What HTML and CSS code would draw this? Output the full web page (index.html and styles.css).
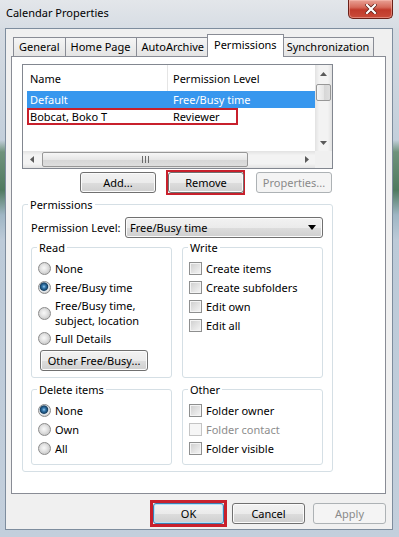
FILE: index.html
```html
<!DOCTYPE html>
<html lang="en">
<head>
    <meta charset="UTF-8">
    <title>Calendar Properties</title>
    <link rel="stylesheet" href="styles.css">
</head>
<body>
    <div class="window">
        <div class="titlebar">
            <span class="title">Calendar Properties</span>
            <span class="close-btn">
                <svg width="12" height="10" viewBox="0 0 12 10">
                    <path d="M2 1 L10 9 M10 1 L2 9" stroke="#5a1a14" stroke-width="3.6" stroke-linecap="square"/>
                    <path d="M2 1 L10 9 M10 1 L2 9" stroke="#fff" stroke-width="2.2" stroke-linecap="square"/>
                </svg>
            </span>
        </div>

        <div class="client">
            <div class="tabs">
                <span class="tab">General</span>
                <span class="tab">Home Page</span>
                <span class="tab">AutoArchive</span>
                <span class="tab active">Permissions</span>
                <span class="tab">Synchronization</span>
            </div>

            <div class="panel">
                <div class="listbox">
                    <div class="list-view">
                        <div class="list-header">
                            <span class="hd-name">Name</span>
                            <span class="hd-level">Permission Level</span>
                        </div>
                        <div class="list-row selected">
                            <span class="c1">Default</span>
                            <span class="c2">Free/Busy time</span>
                        </div>
                        <div class="list-row flagged">
                            <span class="c1">Bobcat, Boko T</span>
                            <span class="c2">Reviewer</span>
                        </div>
                    </div>
                    <div class="vscroll">
                        <span class="sb-arrow">
                            <svg width="7" height="4" viewBox="0 0 7 4"><polygon points="0,4 3.5,0 7,4" fill="#5a5a5a"/></svg>
                        </span>
                        <span class="sb-thumb v"></span>
                        <span class="sb-arrow end">
                            <svg width="7" height="4" viewBox="0 0 7 4"><polygon points="0,0 7,0 3.5,4" fill="#5a5a5a"/></svg>
                        </span>
                    </div>
                    <div class="hscroll">
                        <span class="sb-arrow">
                            <svg width="4" height="7" viewBox="0 0 4 7"><polygon points="4,0 4,7 0,3.5" fill="#5a5a5a"/></svg>
                        </span>
                        <span class="sb-thumb h">
                            <svg width="7" height="7" viewBox="0 0 7 7">
                                <path d="M0.5 0V7M3.5 0V7M6.5 0V7" stroke="#6b6b6b" stroke-width="1"/>
                            </svg>
                        </span>
                        <span class="sb-arrow end">
                            <svg width="4" height="7" viewBox="0 0 4 7"><polygon points="0,0 4,3.5 0,7" fill="#5a5a5a"/></svg>
                        </span>
                    </div>
                    <div class="sb-corner"></div>
                </div>

                <div class="list-buttons">
                    <button class="btn">Add...</button>
                    <span class="flag"><button class="btn">Remove</button></span>
                    <button class="btn wide" disabled>Properties...</button>
                </div>

                <fieldset class="group perms">
                    <legend>Permissions</legend>
                    <div class="level-row">
                        <span>Permission Level:</span>
                        <div class="select">
                            <span>Free/Busy time</span>
                            <svg width="8" height="5" viewBox="0 0 8 5"><polygon points="0,0 8,0 4,5" fill="#000"/></svg>
                        </div>
                    </div>

                    <div class="group-grid">
                        <fieldset class="group sub">
                            <legend>Read</legend>
                            <div class="option"><span class="radio"></span><span>None</span></div>
                            <div class="option"><span class="radio on"></span><span>Free/Busy time</span></div>
                            <div class="option two"><span class="radio"></span><span>Free/Busy time,<br>subject, location</span></div>
                            <div class="option"><span class="radio"></span><span>Full Details</span></div>
                            <button class="btn other">Other Free/Busy...</button>
                        </fieldset>

                        <fieldset class="group sub">
                            <legend>Write</legend>
                            <div class="option"><span class="check"></span><span>Create items</span></div>
                            <div class="option"><span class="check"></span><span>Create subfolders</span></div>
                            <div class="option"><span class="check"></span><span>Edit own</span></div>
                            <div class="option"><span class="check"></span><span>Edit all</span></div>
                        </fieldset>

                        <fieldset class="group sub">
                            <legend>Delete items</legend>
                            <div class="option"><span class="radio on"></span><span>None</span></div>
                            <div class="option"><span class="radio"></span><span>Own</span></div>
                            <div class="option"><span class="radio"></span><span>All</span></div>
                        </fieldset>

                        <fieldset class="group sub">
                            <legend>Other</legend>
                            <div class="option"><span class="check"></span><span>Folder owner</span></div>
                            <div class="option disabled"><span class="check"></span><span>Folder contact</span></div>
                            <div class="option"><span class="check"></span><span>Folder visible</span></div>
                        </fieldset>
                    </div>
                </fieldset>
            </div>

            <div class="dialog-buttons">
                <span class="flag ok"><button class="btn default">OK</button></span>
                <button class="btn">Cancel</button>
                <button class="btn" disabled>Apply</button>
            </div>
        </div>
    </div>
</body>
</html>
```

FILE: styles.css
```css
* {
    box-sizing: border-box;
}

body {
    margin: 0;
    font-family: "Noto Sans", "Open Sans", sans-serif;
    font-size: 11px;
    color: #000;
}

/* Window frame (Aero glass) */
.window {
    width: 399px;
    height: 537px;
    display: flex;
    flex-direction: column;
    overflow: hidden;
    background: linear-gradient(180deg, #e2e5e9 0, #d5dbe2 30px, #c3cfdb 140px, #6f937c 152px, #4f7a5f 190px, #9fb6c4 215px, #bccad8 240px, #c3cfdc 100%);
}

.titlebar {
    height: 28px;
    flex: none;
    display: flex;
    align-items: flex-start;
    padding-left: 6px;
    background: linear-gradient(180deg, #e3e6ea, #d7dde4);
}

.title {
    margin-top: 5px;
    line-height: 16px;
}

.close-btn {
    margin-left: auto;
    margin-right: 6px;
    width: 45px;
    height: 19px;
    display: flex;
    align-items: center;
    justify-content: center;
    border: 1px solid #6a2018;
    border-top: none;
    border-radius: 0 0 5px 5px;
    background: linear-gradient(180deg, #e9a195 0, #d66a5b 40%, #c0392a 55%, #c94c3a 100%);
    box-shadow: inset 0 0 0 1px rgba(255, 200, 190, 0.45);
}

.client {
    flex: 1;
    margin: 0 6px 7px 5px;
    padding: 5px 6px 2px 5px;
    display: flex;
    flex-direction: column;
    background: #f0f0f0;
    border: 1px solid #7e8d9e;
}

/* Tabs */
.tabs {
    height: 22px;
    flex: none;
    display: flex;
    align-items: flex-end;
    margin-left: 2px;
}

.tab {
    height: 19px;
    padding: 0 5px;
    margin-left: -1px;
    line-height: 18px;
    border: 1px solid #898c95;
    border-bottom: none;
    background: linear-gradient(180deg, #f5f5f5, #e4e4e4);
}

.tab:first-child {
    margin-left: 0;
}

.tab.active {
    position: relative;
    z-index: 1;
    height: 23px;
    margin: 0 -2px -1px -3px;
    padding: 0 6px;
    line-height: 19px;
    background: #fff;
}

.tab.active + .tab {
    margin-left: 0;
    padding: 0 4px;
}

.panel {
    height: 438px;
    flex: none;
    padding: 7px 10px 0;
    background: #fff;
    border: 1px solid #898c95;
}

/* List view */
.listbox {
    width: 311px;
    height: 105px;
    display: grid;
    grid-template-columns: 1fr 17px;
    grid-template-rows: 1fr 17px;
    border: 1px solid #828790;
}

.list-view {
    overflow: hidden;
}

.list-header {
    height: 26px;
    display: flex;
}

.hd-name {
    width: 145px;
    padding-left: 7px;
    line-height: 27px;
    border-right: 1px solid #e5e5e5;
}

.hd-level {
    padding-left: 5px;
    line-height: 27px;
}

.list-row {
    height: 17px;
    margin-left: 4px;
    display: flex;
    line-height: 17px;
}

.list-row .c1 {
    width: 143px;
    padding-left: 3px;
}

.list-row .c2 {
    padding-left: 3px;
}

.list-row.selected {
    background: #3797ee;
    color: #fff;
}

.list-row.flagged {
    width: 211px;
    outline: 2px solid #c8202c;
    outline-offset: -2px;
}

.vscroll,
.hscroll {
    display: flex;
}

.vscroll {
    flex-direction: column;
    background: linear-gradient(90deg, #e2e2e2, #f3f3f3 25%, #f3f3f3 75%, #e2e2e2);
}

.hscroll {
    background: linear-gradient(180deg, #e2e2e2, #f3f3f3 25%, #f3f3f3 75%, #e2e2e2);
}

.sb-arrow {
    width: 17px;
    height: 17px;
    flex: none;
    display: flex;
    align-items: center;
    justify-content: center;
}

.sb-arrow.end {
    margin-top: auto;
}

.hscroll .sb-arrow.end {
    margin-top: 0;
    margin-left: auto;
}

.sb-thumb {
    flex: none;
    display: flex;
    align-items: center;
    justify-content: center;
    border: 1px solid #979797;
    border-radius: 2px;
}

.sb-thumb.v {
    height: 17px;
    margin: 2px 1px 0;
    background: linear-gradient(90deg, #f6f6f6, #e6e6e6 50%, #d6d6d6 51%, #dedede);
}

.sb-thumb.h {
    width: 206px;
    margin: 1px 2px;
    background: linear-gradient(180deg, #f6f6f6, #e6e6e6 50%, #d6d6d6 51%, #dedede);
}

.sb-corner {
    background: #f0f0f0;
}

/* Buttons */
.btn {
    width: 75px;
    height: 21px;
    padding: 0;
    font: inherit;
    color: #000;
    border: 1px solid #707070;
    border-radius: 3px;
    background: linear-gradient(180deg, #f2f2f2 0, #ebebeb 50%, #dddddd 51%, #cfcfcf 100%);
    box-shadow: inset 0 0 0 1px #fbfbfb;
}

.btn:disabled {
    color: #8a8a8a;
    border-color: #adb2b5;
    background: #f4f4f4;
    box-shadow: none;
}

.btn.wide {
    width: 76px;
}

.btn.default {
    width: 71px;
    border-color: #3c7fb1;
    box-shadow: inset 0 0 0 1px #b4e2f8;
}

.flag {
    display: inline-flex;
    border: 2px solid #c8202c;
}

.flag.ok {
    border-width: 3px;
    margin-right: -3px;
}

.list-buttons {
    width: 311px;
    height: 25px;
    margin-top: 1px;
    padding-right: 1px;
    display: flex;
    justify-content: flex-end;
    align-items: center;
    gap: 11px;
}

.list-buttons .btn:first-child {
    width: 76px;
    margin-right: -1px;
}

/* Group boxes */
.group {
    margin: 0;
    min-width: 0;
    border: 1px solid #d5dfe5;
    border-radius: 3px;
}

.group legend {
    padding: 0 2px;
    line-height: 15px;
}

.perms {
    width: 311px;
    margin-top: 2px;
    padding: 5px 9px 6px 8px;
}

.perms > legend {
    margin-left: -3px;
}

.level-row {
    height: 21px;
    display: flex;
    align-items: center;
}

.select {
    width: 198px;
    height: 21px;
    margin-left: auto;
    padding: 0 6px 0 4px;
    display: flex;
    align-items: center;
    justify-content: space-between;
    border: 1px solid #707070;
    border-radius: 3px;
    background: linear-gradient(180deg, #f2f2f2 0, #ebebeb 50%, #dddddd 51%, #cfcfcf 100%);
    box-shadow: inset 0 0 0 1px #fbfbfb;
}

.group-grid {
    margin-top: 2px;
    display: grid;
    grid-template-columns: 141px 141px;
    column-gap: 10px;
    row-gap: 4px;
}

.sub {
    padding: 4px 4px 6px 6px;
}

.sub > legend {
    margin-left: -1px;
}

.option {
    min-height: 19px;
    padding: 3px 0;
    display: flex;
    align-items: center;
    gap: 4px;
    line-height: 13px;
}

.option.two {
    padding: 1px 0;
    line-height: 15px;
}

.option.disabled {
    color: #8d8d8d;
}

.radio {
    width: 13px;
    height: 13px;
    flex: none;
    border-radius: 50%;
    border: 1px solid #8b8b8b;
    background: radial-gradient(circle at 45% 45%, #f8f8f8 0, #e6e6e6 3px, #cdcdcd 6px);
}

.radio.on {
    background: radial-gradient(circle at 45% 42%, #9fd0f2 0, #3d7fb2 1.5px, #1d5583 3px, #1a3f5e 3.8px, #c6d3de 4.6px, #ececec 5.2px, #d2d2d2 6px);
}

.check {
    width: 13px;
    height: 13px;
    flex: none;
    border: 1px solid #8e8f8f;
    background: linear-gradient(135deg, #cdcdcd, #f6f6f6);
    box-shadow: inset 0 0 0 1px #f4f4f4;
}

.disabled .check {
    border-color: #c4c4c4;
    background: #f6f6f6;
    box-shadow: none;
}

.btn.other {
    width: 108px;
    margin: 2px 0 0 2px;
}

.dialog-buttons {
    height: 27px;
    margin-top: 6px;
    flex: none;
    display: flex;
    justify-content: flex-end;
    align-items: center;
    gap: 8px;
}

.dialog-buttons .btn {
    width: 73px;
}

.dialog-buttons .btn.default {
    width: 71px;
}
```
